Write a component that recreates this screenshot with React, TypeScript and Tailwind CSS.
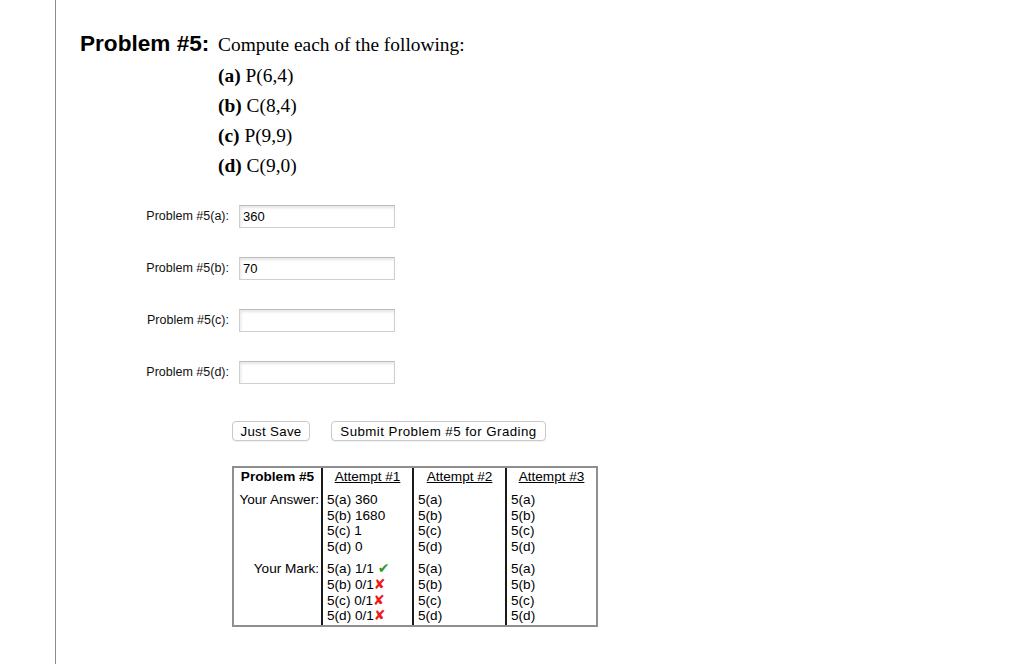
import React from 'react';

const parts = ['a', 'b', 'c', 'd'];
const answers: Record<string, string> = { a: '360', b: '70', c: '', d: '' };

function AnswerField({ part }: { part: string }) {
    return (
        <div className="flex items-center h-[23px]">
            <label className="w-[173px] text-right text-[12.5px] text-[#111]">Problem #5({part}):</label>
            <div className="ml-[10px] w-[156px] h-[23px] border border-[#cfcfcf] border-t-[#bdbdbd] bg-white shadow-[inset_1px_2px_3px_rgba(0,0,0,0.10)] px-[3px] flex items-center text-[13px] text-black">
                {answers[part]}
            </div>
        </div>
    );
}

function Lines({ items }: { items: React.ReactNode[] }) {
    return (
        <div className="flex flex-col">
            {items.map((it, i) => (
                <div key={i} className="h-[15.6px] leading-[15.6px] whitespace-nowrap">{it}</div>
            ))}
        </div>
    );
}

const Check = () => <span className="text-[#2e9a22] font-['DejaVu_Sans'] text-[14px] leading-none">✔</span>;
const Cross = () => <span className="text-[#ec1c1c] font-['DejaVu_Sans'] text-[14px] leading-none">✘</span>;

export default function App() {
    const blanks = parts.map(p => `5(${p})`);

    return (
        <div className="w-[1024px] h-[664px] bg-white overflow-hidden font-['Liberation_Sans',Arial,sans-serif] text-black">
            <div className="ml-[55px] h-full border-l border-[#8c8c8c] pt-[27px]">
                {/* Problem statement */}
                <div className="flex items-baseline pl-[24px]">
                    <div className="w-[138px] text-[22.6px] font-bold">Problem #5:</div>
                    <div className="font-['Liberation_Serif','Times_New_Roman',serif] text-[19.4px] leading-[30px]">
                        <div className="mb-[1px]">Compute each of the following:</div>
                        <div><b>(a)</b> P(6,4)</div>
                        <div><b>(b)</b> C(8,4)</div>
                        <div><b>(c)</b> P(9,9)</div>
                        <div><b>(d)</b> C(9,0)</div>
                    </div>
                </div>

                {/* Answer inputs */}
                <div className="mt-[24px] flex flex-col gap-[29px]">
                    {parts.map(p => <AnswerField key={p} part={p} />)}
                </div>

                {/* Buttons */}
                <div className="mt-[37px] ml-[176px] flex gap-[21px]">
                    <button className="h-[20px] w-[78px] rounded-[4px] border border-[#c9c9c9] bg-white text-[13.3px] tracking-[0.3px] shadow-[0_1px_1px_rgba(0,0,0,0.06)]">Just Save</button>
                    <button className="h-[20px] w-[215px] rounded-[4px] border border-[#c9c9c9] bg-white text-[13.3px] tracking-[0.45px] shadow-[0_1px_1px_rgba(0,0,0,0.06)]">Submit Problem #5 for Grading</button>
                </div>

                {/* Attempts table */}
                <table className="mt-[25px] ml-[176px] w-[366px] table-fixed border-separate border-spacing-0 border-2 border-[#8f8f8f] text-[13.6px]">
                    <colgroup>
                        <col className="w-[87px]" />
                        <col className="w-[91px]" />
                        <col className="w-[93px]" />
                        <col />
                    </colgroup>
                    <tbody>
                        <tr className="align-top">
                            <td className="text-center font-bold pt-[1px] leading-[16px] whitespace-nowrap">Problem #5</td>
                            <td className="text-center border-l-2 border-[#1a1a1a] pt-[1px] leading-[16px]"><u>Attempt #1</u></td>
                            <td className="text-center border-l-2 border-[#1a1a1a] pt-[1px] leading-[16px]"><u>Attempt #2</u></td>
                            <td className="text-center border-l-2 border-[#1a1a1a] pt-[1px] leading-[16px]"><u>Attempt #3</u></td>
                        </tr>
                        <tr className="align-top">
                            <td className="text-right pr-[2px] pt-[7px] leading-[15.6px] whitespace-nowrap">Your Answer:</td>
                            <td className="border-l-2 border-[#1a1a1a] pl-[4px] pt-[7px]">
                                <Lines items={['5(a) 360', '5(b) 1680', '5(c) 1', '5(d) 0']} />
                            </td>
                            <td className="border-l-2 border-[#1a1a1a] pl-[4px] pt-[7px]"><Lines items={blanks} /></td>
                            <td className="border-l-2 border-[#1a1a1a] pl-[4px] pt-[7px]"><Lines items={blanks} /></td>
                        </tr>
                        <tr className="align-top">
                            <td className="text-right pr-[2px] pt-[7px] pb-[1px] leading-[15.6px] whitespace-nowrap">Your Mark:</td>
                            <td className="border-l-2 border-[#1a1a1a] pl-[4px] pt-[7px] pb-[1px]">
                                <Lines items={[
                                    <>5(a) 1/1 <Check /></>,
                                    <>5(b) 0/1<Cross /></>,
                                    <>5(c) 0/1<Cross /></>,
                                    <>5(d) 0/1<Cross /></>,
                                ]} />
                            </td>
                            <td className="border-l-2 border-[#1a1a1a] pl-[4px] pt-[7px] pb-[1px]"><Lines items={blanks} /></td>
                            <td className="border-l-2 border-[#1a1a1a] pl-[4px] pt-[7px] pb-[1px]"><Lines items={blanks} /></td>
                        </tr>
                    </tbody>
                </table>
            </div>
        </div>
    );
}
